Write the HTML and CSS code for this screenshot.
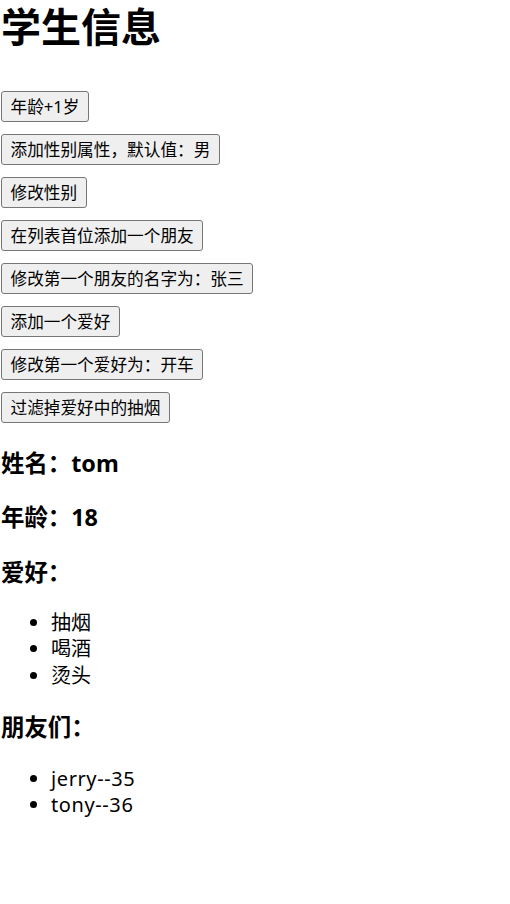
FILE: index.html
```html
<!DOCTYPE html>
<html lang="zh-CN">
<head>
<meta charset="utf-8">
<title>学生信息</title>
<link rel="stylesheet" href="styles.css">
</head>
<body>
<div class="app">
  <h1 class="title">学生信息</h1>
  <div class="actions">
    <button class="btn">年龄+1岁</button>
    <button class="btn">添加性别属性，默认值：男</button>
    <button class="btn">修改性别</button>
    <button class="btn">在列表首位添加一个朋友</button>
    <button class="btn">修改第一个朋友的名字为：张三</button>
    <button class="btn">添加一个爱好</button>
    <button class="btn">修改第一个爱好为：开车</button>
    <button class="btn">过滤掉爱好中的抽烟</button>
  </div>
  <h3 class="field">姓名：tom</h3>
  <h3 class="field">年龄：18</h3>
  <h3 class="field field-hobbies">爱好：</h3>
  <ul class="list">
    <li>抽烟</li>
    <li>喝酒</li>
    <li>烫头</li>
  </ul>
  <h3 class="field field-friends">朋友们：</h3>
  <ul class="list list-friends">
    <li>jerry--35</li>
    <li>tony--36</li>
  </ul>
</div>
</body>
</html>
```
FILE: styles.css
```css
html, body {
  margin: 0;
  padding: 0;
  background: #fff;
}
body {
  font-family: "Noto Sans", "Noto Sans CJK SC", sans-serif;
  font-size: 20px;
  color: #000;
}
.app {
  padding-left: 1px;
}
.title {
  font-size: 40px;
  line-height: 53px;
  font-weight: 700;
  margin: 0 0 38px 0;
}
.actions {
  display: flex;
  flex-direction: column;
  align-items: flex-start;
  gap: 12px;
}
.btn {
  font-family: "Noto Sans", "Noto Sans CJK SC", sans-serif;
  font-size: 16.67px;
  line-height: 23px;
  height: 31px;
  padding: 3px 8.5px;
  margin: 0;
  background: #efefef;
  border: 1px solid #767676;
  border-radius: 3px;
  color: #000;
}
.field {
  font-size: 23.4px;
  line-height: 31px;
  font-weight: 700;
  margin: 23.4px 0;
}
.actions + .field {
  margin-top: 25px;
}
.field-hobbies {
  margin-bottom: 22px;
}
.field-friends {
  margin-bottom: 22.5px;
}
.list {
  margin: 0 0 23.4px;
  padding-left: 50px;
  list-style: disc;
}
.list li {
  line-height: 26.4px;
}
.list-friends li {
  line-height: 26px;
  letter-spacing: 0.6px;
}
```
